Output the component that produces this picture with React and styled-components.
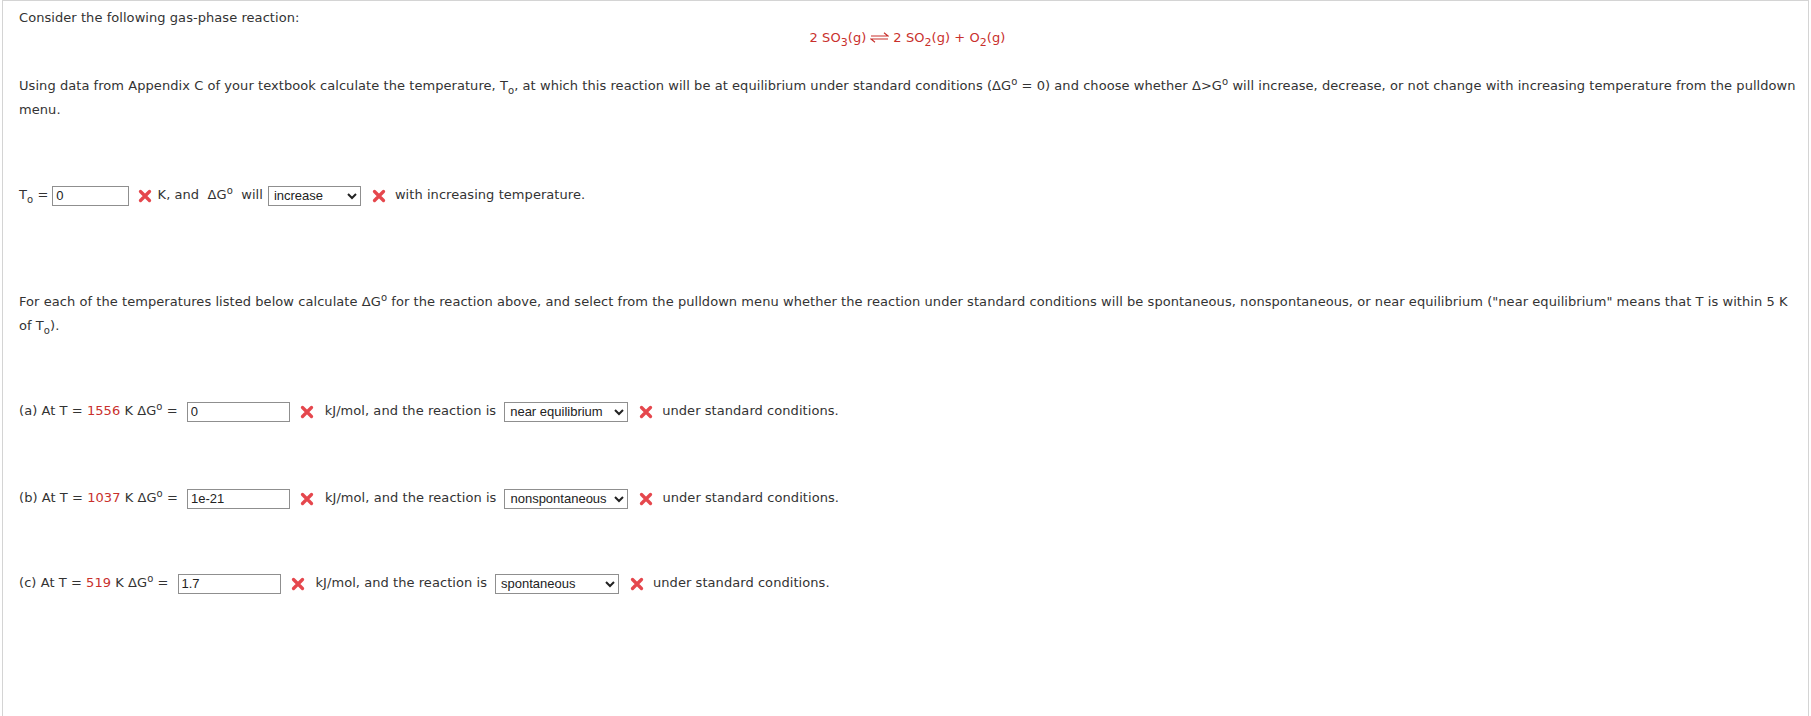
import React from "react";
import styled, { createGlobalStyle } from "styled-components";

const GlobalStyle = createGlobalStyle`
  html, body {
    margin: 0;
    padding: 0;
    background: #fff;
  }
  body {
    font-family: "DejaVu Sans", Verdana, sans-serif;
    font-size: 13px;
    letter-spacing: 0.06px;
    color: #333;
  }
`;

const Panel = styled.div`
  box-sizing: border-box;
  min-height: 716px;
  margin: 0 2px;
  padding: 7px 12px 0 16px;
  border: 1px solid #d4d4d4;
  border-bottom: none;
`;

const Line = styled.div`
  line-height: 20px;
`;

const Equation = styled.div`
  line-height: 20px;
  text-align: center;
  color: #c9302c;
  white-space: pre;
`;

const Arrow = styled.svg`
  display: inline-block;
  vertical-align: -1px;
  margin: 0 4px;
`;

const Paragraph = styled.p`
  margin: ${(p) => p.$top}px 0 0 0;
  line-height: 24px;
`;

const Row = styled.div`
  height: 26px;
  line-height: 26px;
  margin-top: ${(p) => p.$top}px;
  white-space: pre;
`;

const Red = styled.span`
  color: #c9302c;
`;

const Sub = styled.sub`
  font-size: ${(p) => p.$size || 10}px;
  line-height: 0;
  vertical-align: -4px;
`;

const Sup = styled.sup`
  font-size: 10px;
  line-height: 0;
  vertical-align: 5px;
`;

const Delta = styled.span`
  font-family: "DejaVu Sans", sans-serif;
`;

const TextInput = styled.input`
  box-sizing: border-box;
  width: ${(p) => p.$w}px;
  height: 20px;
  margin: 0 0 0 ${(p) => p.$ml}px;
  padding: 1px 3px;
  border: 1px solid #8f8f8f;
  border-radius: 0;
  font-family: Arial, "Liberation Sans", sans-serif;
  font-size: 13px;
  letter-spacing: 0;
  color: #222;
  background: #fff;
  vertical-align: middle;
`;

const Select = styled.select`
  box-sizing: border-box;
  width: ${(p) => p.$w}px;
  height: 20px;
  margin: 0 0 0 ${(p) => p.$ml}px;
  padding: 0 1px;
  border: 1px solid #8f8f8f;
  border-radius: 0;
  font-family: Arial, "Liberation Sans", sans-serif;
  font-size: 13px;
  letter-spacing: 0;
  color: #222;
  background: #fff;
  vertical-align: middle;
`;

const Mark = styled.span`
  display: inline-block;
  width: 14px;
  height: 14px;
  margin: 0 ${(p) => p.$after}px 0 ${(p) => p.$before}px;
  vertical-align: middle;
  line-height: 0;
`;

function Cross({ before = 10, after = 4 }) {
  return (
    <Mark $before={before} $after={after}>
      <svg width="14" height="14" viewBox="0 0 14 14">
        <path
          d="M2.5 2.5 L11.5 11.5 M11.5 2.5 L2.5 11.5"
          stroke="#e5474d"
          strokeWidth="3.3"
          strokeLinecap="round"
        />
      </svg>
    </Mark>
  );
}

function EqArrow() {
  return (
    <Arrow width="19" height="11" viewBox="0 0 19 11">
      <path
        d="M1 4 H18 L14 0.8 M18 7 H1 L5 10.2"
        fill="none"
        stroke="#c9302c"
        strokeWidth="1.1"
      />
    </Arrow>
  );
}

const DG = () => (
  <>
    <Delta>Δ</Delta>G<Sup>o</Sup>
  </>
);

const To = () => (
  <>
    T<Sub>o</Sub>
  </>
);

function PartRow({ label, temp, value, choice, top }) {
  return (
    <Row $top={top}>
      {`(${label}) At T = `}
      <Red>{temp}</Red>
      {" K "}
      <DG />
      {" ="}
      <TextInput $w={103} $ml={9} defaultValue={value} />
      <Cross before={10} after={11} />
      {"kJ/mol, and the reaction is"}
      <Select $w={124} $ml={8} defaultValue={choice}>
        <option value="spontaneous">spontaneous</option>
        <option value="nonspontaneous">nonspontaneous</option>
        <option value="near equilibrium">near equilibrium</option>
      </Select>
      <Cross before={11} after={9} />
      {"under standard conditions."}
    </Row>
  );
}

export default function App() {
  return (
    <>
      <GlobalStyle />
      <Panel>
        <Line>Consider the following gas-phase reaction:</Line>
        <Equation>
          2 SO<Sub $size={11}>3</Sub>(g)
          <EqArrow />
          2 SO<Sub $size={11}>2</Sub>(g) + O<Sub $size={11}>2</Sub>(g)
        </Equation>

        <Paragraph $top={26}>
          Using data from Appendix C of your textbook calculate the
          temperature, <To />, at which this reaction will be at equilibrium
          under standard conditions (<DG /> = 0) and choose whether{" "}
          <Delta>Δ</Delta>&gt;G<Sup>o</Sup> will increase, decrease, or not
          change with increasing temperature from the pulldown menu.
        </Paragraph>

        <Row $top={60}>
          <To />
          {" ="}
          <TextInput $w={77} $ml={4} defaultValue="0" />
          <Cross before={9} after={1} />
          {" K, and  "}
          <DG />
          {"  will"}
          <Select $w={93} $ml={5} defaultValue="increase">
            <option value="increase">increase</option>
            <option value="decrease">decrease</option>
            <option value="not change">not change</option>
          </Select>
          <Cross before={11} after={9} />
          {"with increasing temperature."}
        </Row>

        <Paragraph $top={82}>
          For each of the temperatures listed below calculate <DG /> for the
          reaction above, and select from the pulldown menu whether the
          reaction under standard conditions will be spontaneous,
          nonspontaneous, or near equilibrium ("near equilibrium" means that T
          is within 5 K of <To />).
        </Paragraph>

        <PartRow label="a" temp="1556" value="0" choice="near equilibrium" top={60} />
        <PartRow label="b" temp="1037" value="1e-21" choice="nonspontaneous" top={61} />
        <PartRow label="c" temp="519" value="1.7" choice="spontaneous" top={59} />
      </Panel>
    </>
  );
}
